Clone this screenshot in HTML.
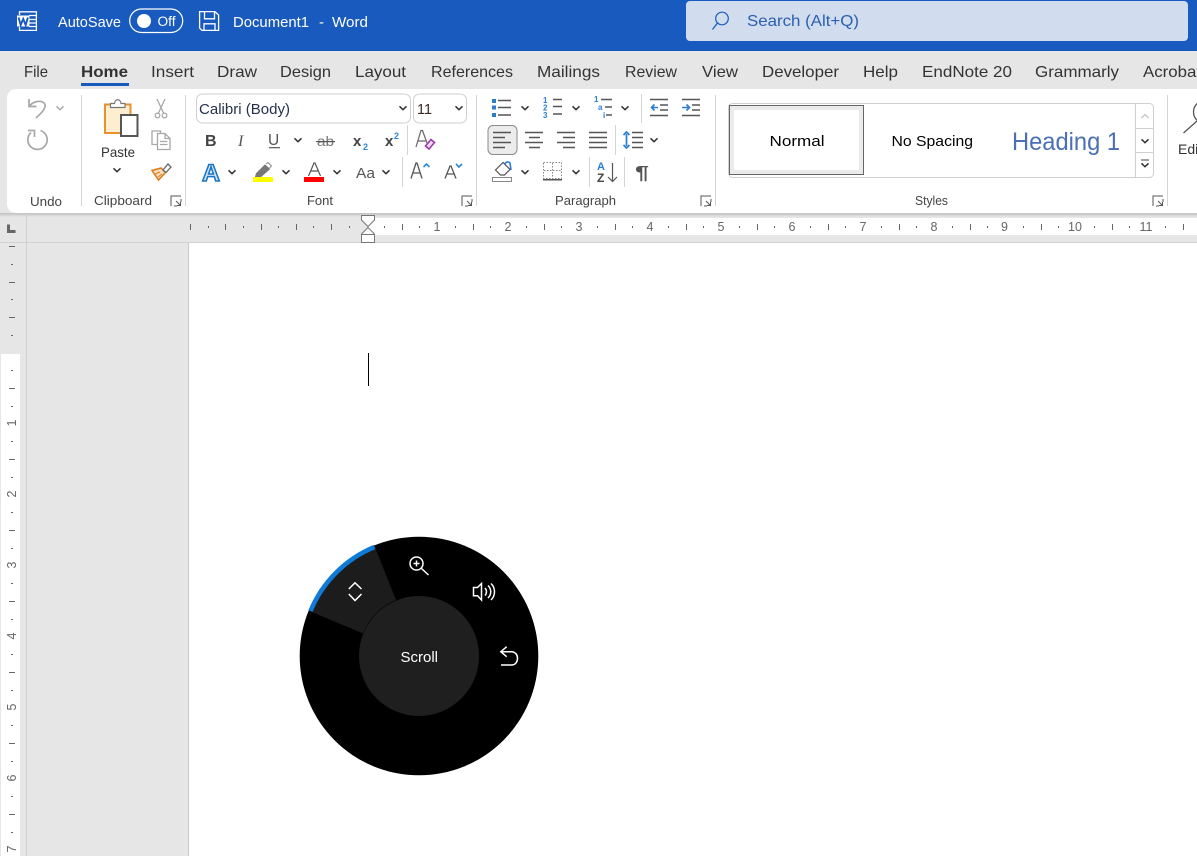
<!DOCTYPE html>
<html><head><meta charset="utf-8"><title>Document1 - Word</title>
<style>
html,body{margin:0;padding:0;width:1197px;height:856px;overflow:hidden;background:#e6e6e6}
svg{display:block;position:absolute;left:0;top:0}
text{font-family:"Liberation Sans",sans-serif;fill:#333}
.t{font-size:16px;fill:#333}
.g{font-size:13px;fill:#444}
.n{font-size:12.5px;fill:#666}
</style></head><body>
<svg width="1197" height="856" viewBox="0 0 1197 856" xmlns="http://www.w3.org/2000/svg">
<defs>
<path id="c" d="M-3.5-1.7 0 1.700 3.500-1.700" fill="none" stroke="#333" stroke-width="1.500"/>
<g id="dl" fill="none" stroke="#555" stroke-width="1"><path d="M-5 5V-5H5M0 0 4.500 4.500M4.500 1V4.500H1"/><path d="M-2 5H1M5-2V1"/></g>
<linearGradient id="sh" x1="0" y1="0" x2="0" y2="1"><stop offset="0" stop-color="#c0c0c0"/><stop offset="1" stop-color="#e6e6e6"/></linearGradient>
<pattern id="hr" patternUnits="userSpaceOnUse" x="366" y="215" width="71" height="28">
<rect x="18" y="11" width="1" height="2" fill="#666"/><rect x="36" y="9" width="1" height="6" fill="#666"/><rect x="53" y="11" width="1" height="2" fill="#666"/>
</pattern>
<pattern id="vr" patternUnits="userSpaceOnUse" x="0" y="352" width="24" height="71">
<rect x="11" y="18" width="2" height="1" fill="#666"/><rect x="9" y="36" width="6" height="1" fill="#666"/><rect x="11" y="54" width="2" height="1" fill="#666"/>
</pattern>
</defs>

<!-- Title bar -->
<rect width="1197" height="51" fill="#185abd"/>
<path d="M19.500 15V11.800H36.400V30.400H19.500V27" fill="none" stroke="#fff" stroke-width="1.300"/>
<path d="M29 15.500H36.400M29 19.500H36.400M29 23H36.400M29 26.500H36.400" fill="none" stroke="#fff" stroke-width="1.300"/>
<rect x="17" y="15.500" width="12.500" height="11" fill="#fff"/>
<path d="M18.600 17.500 20.700 25 23.200 19 25.700 25 27.900 17.500" fill="none" stroke="#185abd" stroke-width="1.900"/>
<text x="58" y="27" style="fill:#fff;font-size:15px" textLength="63" lengthAdjust="spacingAndGlyphs">AutoSave</text>
<rect x="129.700" y="9" width="53" height="23.500" rx="11.750" fill="none" stroke="#fff" stroke-width="1.200"/>
<circle cx="144" cy="21" r="7" fill="#fff"/>
<text x="157.500" y="26" style="fill:#fff;font-size:13.500px" textLength="18" lengthAdjust="spacingAndGlyphs">Off</text>
<path d="M199.600 11.600H215L218.600 15V30.400H202L199.600 28Z" fill="none" stroke="#fff" stroke-width="1.300"/>
<path d="M204.500 11.800V18.800H214.500V11.800M204 30V23.800H215V30" fill="none" stroke="#fff" stroke-width="1.300"/>
<text x="233" y="27" style="fill:#fff;font-size:15px" textLength="76" lengthAdjust="spacingAndGlyphs">Document1</text>
<text x="319" y="27" style="fill:#fff;font-size:15px">-</text>
<text x="332" y="27" style="fill:#fff;font-size:15px" textLength="36" lengthAdjust="spacingAndGlyphs">Word</text>
<rect x="686" y="1" width="502" height="40" rx="4" fill="#d1dcee"/>
<circle cx="722" cy="18.500" r="6.300" fill="none" stroke="#185abd" stroke-width="1.200"/>
<path d="M717.500 23 712.500 29.500" stroke="#185abd" stroke-width="1.300"/>
<text x="747" y="26" style="fill:#2a5fae;font-size:16px" textLength="112" lengthAdjust="spacingAndGlyphs">Search (Alt+Q)</text>

<!-- Tabs -->
<text class="t" x="24" y="77" textLength="24" lengthAdjust="spacingAndGlyphs">File</text>
<text class="t" x="81" y="77" textLength="47" lengthAdjust="spacingAndGlyphs" style="font-weight:bold;fill:#333">Home</text>
<rect x="81" y="83" width="48" height="3" fill="#185abd"/>
<text class="t" x="151" y="77" textLength="43" lengthAdjust="spacingAndGlyphs">Insert</text>
<text class="t" x="217" y="77" textLength="40" lengthAdjust="spacingAndGlyphs">Draw</text>
<text class="t" x="280" y="77" textLength="51" lengthAdjust="spacingAndGlyphs">Design</text>
<text class="t" x="355" y="77" textLength="51" lengthAdjust="spacingAndGlyphs">Layout</text>
<text class="t" x="431" y="77" textLength="82" lengthAdjust="spacingAndGlyphs">References</text>
<text class="t" x="537" y="77" textLength="63" lengthAdjust="spacingAndGlyphs">Mailings</text>
<text class="t" x="625" y="77" textLength="52" lengthAdjust="spacingAndGlyphs">Review</text>
<text class="t" x="702" y="77" textLength="36" lengthAdjust="spacingAndGlyphs">View</text>
<text class="t" x="762" y="77" textLength="77" lengthAdjust="spacingAndGlyphs">Developer</text>
<text class="t" x="863" y="77" textLength="35" lengthAdjust="spacingAndGlyphs">Help</text>
<text class="t" x="922" y="77" textLength="90" lengthAdjust="spacingAndGlyphs">EndNote 20</text>
<text class="t" x="1035" y="77" textLength="84" lengthAdjust="spacingAndGlyphs">Grammarly</text>
<text class="t" x="1143" y="77" textLength="58" lengthAdjust="spacingAndGlyphs">Acrobat</text>

<!-- Ruler -->
<rect x="0" y="213" width="1197" height="4" fill="url(#sh)"/>
<rect x="368" y="218" width="829" height="17" fill="#fff"/>
<rect x="0" y="242" width="189" height="1" fill="#d2d2d2"/>
<rect x="189" y="242" width="1008" height="1" fill="#d2d2d2"/>
<rect x="189" y="243" width="1008" height="613" fill="#fff"/>
<rect x="188" y="243" width="1" height="613" fill="#c8c8c8"/>
<rect x="26" y="215" width="1" height="641" fill="#d0d0d0"/>
<rect x="370" y="215" width="827" height="28" fill="url(#hr)"/>
<path d="M190.500 224v6M225.500 224v6M261.500 224v6M296.500 224v6M331.500 224v6" stroke="#666" stroke-width="1"/>
<path d="M208.500 226v2M243.500 226v2M278.500 226v2M313.500 226v2M349.500 226v2" stroke="#666" stroke-width="1"/>
<text class="n" x="437" y="231" text-anchor="middle">1</text>
<text class="n" x="508" y="231" text-anchor="middle">2</text>
<text class="n" x="579" y="231" text-anchor="middle">3</text>
<text class="n" x="650" y="231" text-anchor="middle">4</text>
<text class="n" x="721" y="231" text-anchor="middle">5</text>
<text class="n" x="792" y="231" text-anchor="middle">6</text>
<text class="n" x="863" y="231" text-anchor="middle">7</text>
<text class="n" x="934" y="231" text-anchor="middle">8</text>
<text class="n" x="1004.500" y="231" text-anchor="middle">9</text>
<text class="n" x="1075" y="231" text-anchor="middle">10</text>
<text class="n" x="1146" y="231" text-anchor="middle">11</text>
<path d="M361.500 215.500H374.500V220L368 226.500 361.500 220Z" fill="#fff" stroke="#777"/>
<path d="M368 227.500 374.500 234V242.500H361.500V234Z" fill="#fff" stroke="#777"/>
<path d="M361.500 234.500H374.500" stroke="#777"/>
<!-- Vertical ruler -->
<rect x="1" y="354" width="19" height="502" fill="#fff"/>
<path d="M7 224.500H10V230H15.500V233H7Z" fill="#666"/>
<rect x="0" y="354" width="24" height="502" fill="url(#vr)"/>
<path d="M9 246.500h6M9 282.500h6M9 317.500h6" stroke="#666"/>
<path d="M11 264.500h2M11 299.500h2M11 335.500h2" stroke="#666"/>
<text class="n" transform="translate(16,423) rotate(-90)" text-anchor="middle">1</text>
<text class="n" transform="translate(16,494) rotate(-90)" text-anchor="middle">2</text>
<text class="n" transform="translate(16,565) rotate(-90)" text-anchor="middle">3</text>
<text class="n" transform="translate(16,636) rotate(-90)" text-anchor="middle">4</text>
<text class="n" transform="translate(16,707) rotate(-90)" text-anchor="middle">5</text>
<text class="n" transform="translate(16,778) rotate(-90)" text-anchor="middle">6</text>
<text class="n" transform="translate(16,849) rotate(-90)" text-anchor="middle">7</text>

<!-- Ribbon -->
<rect x="7" y="89" width="1210" height="124" rx="9" fill="#fff"/>
<path d="M81.500 95V206M185.500 95V206M476.500 95V206M715.500 95V206M1167.500 95V206" stroke="#d4d4d4"/>

<!-- Undo -->
<path d="M29 99V106.500H36.500M29.500 106C33 101.500 41 99.500 44.500 103.500C47 107.500 42 112.500 36 118" fill="none" stroke="#a8a8a8" stroke-width="1.700"/>
<use href="#c" x="60" y="108" style="opacity:.4"/>
<path d="M40.500 130.500A9.700 9.700 0 1 1 31 132.500M28 130.500H34.500V137" fill="none" stroke="#a8a8a8" stroke-width="1.700"/>
<text class="g" x="30" y="206" textLength="32" lengthAdjust="spacingAndGlyphs">Undo</text>

<!-- Clipboard -->
<rect x="105" y="104.500" width="25.500" height="28.500" fill="#fdeecf" stroke="#e8912d" stroke-width="2"/>
<path d="M110.500 107.500V103.500H114.500C115 98.500 120.500 98.500 121 103.500H125V107.500Z" fill="#fff" stroke="#777" stroke-width="1.200"/>
<rect x="121" y="115" width="16.500" height="21" fill="#fff" stroke="#555" stroke-width="2"/>
<text x="101" y="157" style="font-size:14px;fill:#333" textLength="34" lengthAdjust="spacingAndGlyphs">Paste</text>
<use href="#c" x="117" y="170"/>
<g fill="none" stroke="#a8a8a8" stroke-width="1.300">
<path d="M157 99 163.500 113M165 99 158.500 113"/>
<circle cx="157.500" cy="115.500" r="2.300"/><circle cx="164.500" cy="115.500" r="2.300"/>
<path d="M157 144.500H152V131H160.500V133.500"/>
<path d="M157.500 133.500H165L170 138.500V149.500H157.500ZM165 133.500V138.500H170M160 141.500H167.500M160 144.500H167.500" />
</g>
<path d="M161 168 152 170.500 158.500 180 165.500 172.500Z" fill="#f6dcb8" stroke="#dd7a17" stroke-width="1.500"/>
<path d="M155 174 160 172M158 177 162 174" stroke="#dd7a17"/>
<path d="M163 170 168 164 171 167 166 172.500Z" fill="#fff" stroke="#666" stroke-width="1.300"/>
<text class="g" x="94" y="205" textLength="58" lengthAdjust="spacingAndGlyphs">Clipboard</text>
<use href="#dl" x="176" y="201"/>

<!-- Font -->
<rect x="196.500" y="94" width="214" height="29" rx="6" fill="#fff" stroke="#cfcfcf"/>
<rect x="413.500" y="94" width="53" height="29" rx="6" fill="#fff" stroke="#cfcfcf"/>
<text x="199" y="114" style="font-size:14.500px;fill:#26324d" textLength="91" lengthAdjust="spacingAndGlyphs">Calibri (Body)</text>
<text x="417" y="114" style="font-size:14.500px;fill:#3d2a26" textLength="15" lengthAdjust="spacingAndGlyphs">11</text>
<use href="#c" x="403" y="108"/><use href="#c" x="459" y="108"/>

<text x="205" y="146" style="font-size:16px;font-weight:bold;fill:#444">B</text>
<text x="238" y="146" style="font-size:16px;font-style:italic;font-family:'Liberation Serif',serif;fill:#555">I</text>
<text x="268" y="145" style="font-size:15.500px;fill:#555">U</text>
<rect x="269" y="147" width="11" height="1.300" fill="#666"/>
<use href="#c" x="298" y="140"/>
<text x="317" y="146" style="font-size:14px;fill:#777" textLength="17" lengthAdjust="spacingAndGlyphs">ab</text>
<rect x="316" y="141" width="19" height="1.200" fill="#555"/>
<text x="353" y="146" style="font-size:15px;font-weight:bold;fill:#444">x</text>
<text x="363" y="150" style="font-size:9px;font-weight:bold;fill:#2b88d8">2</text>
<text x="385" y="146" style="font-size:15px;font-weight:bold;fill:#444">x</text>
<text x="394" y="139" style="font-size:9px;font-weight:bold;fill:#2b88d8">2</text>
<path d="M407.500 125V155M402.500 157V187" stroke="#d4d4d4"/>
<path d="M416 147 421 130.500H422.500L427 143M418 141H425.500" fill="none" stroke="#666" stroke-width="1.200"/>
<path d="M425.500 146 431 139.500 434.500 142.500 429 149Z" fill="#f3d9f0" stroke="#9a3bab" stroke-width="1.600"/>

<!-- Text effects -->
<text x="202" y="181" style="font-size:24px;font-weight:bold;fill:#cfe6f8;stroke:#1b74c4;stroke-width:1.500px" textLength="18" lengthAdjust="spacingAndGlyphs">A</text>
<use href="#c" x="232" y="172"/>
<path d="M256.500 173.500 265 165 269.500 169 261 176.500H255.500Z" fill="#777" stroke="#777"/>
<path d="M266 164 268 162.500 271.500 166 269.500 168" fill="none" stroke="#888"/>
<rect x="253" y="177" width="20" height="5" fill="#ff0"/>
<use href="#c" x="286" y="172"/>
<path d="M308.500 176 314 163H315L320.500 176M310.500 171H318.500" fill="none" stroke="#555" stroke-width="1.200"/>
<rect x="304" y="177" width="20" height="5" fill="#f00"/>
<use href="#c" x="337" y="172"/>
<text x="356" y="178" style="font-size:15px;fill:#555" textLength="19" lengthAdjust="spacingAndGlyphs">Aa</text>
<use href="#c" x="386" y="172"/>
<path d="M411 178.500 416 163H417L422 178.500M413 173H420" fill="none" stroke="#555" stroke-width="1.300"/>
<path d="M423.500 167 426.500 164 429.500 167" fill="none" stroke="#2b88d8" stroke-width="1.600"/>
<path d="M445 178.500 450 166H451L456 178.500M447 174H454" fill="none" stroke="#555" stroke-width="1.300"/>
<path d="M456 164 459 167 462 164" fill="none" stroke="#2b88d8" stroke-width="1.600"/>
<text class="g" x="307" y="205" textLength="26" lengthAdjust="spacingAndGlyphs">Font</text>
<use href="#dl" x="467" y="201"/>

<!-- Paragraph row 1 -->
<g fill="#2b7cd3">
<rect x="492" y="99" width="4" height="4"/><rect x="492" y="105.500" width="4" height="4"/><rect x="492" y="113" width="4" height="4"/>
</g>
<path d="M498 100.500H511M498 107.500H511M498 115H511M553 99.500H562M553 106.500H562M553 114H562M601 99.500H612M605 107H612M606 115H612M650 99.500H668M650 115.500H668M660 105H668M660 110H668M682 99.500H700M682 115.500H700M692 105H700M692 110H700" stroke="#555" stroke-width="1.500" fill="none"/>
<text x="543" y="103" style="font-size:8px;font-weight:bold;fill:#2b7cd3">1</text>
<text x="543" y="110.500" style="font-size:8px;font-weight:bold;fill:#2b7cd3">2</text>
<text x="543" y="118" style="font-size:8px;font-weight:bold;fill:#2b7cd3">3</text>
<text x="594" y="102" style="font-size:8px;font-weight:bold;fill:#2b7cd3">1</text>
<text x="598" y="110" style="font-size:8px;font-weight:bold;fill:#2b7cd3">a</text>
<text x="603" y="118" style="font-size:8px;font-weight:bold;fill:#2b7cd3">i</text>
<use href="#c" x="525" y="108"/><use href="#c" x="576" y="108"/><use href="#c" x="625" y="108"/>
<path d="M641.500 94V123M615.500 125V155M589.500 157V187M624.500 157V187" stroke="#d4d4d4"/>
<path d="M654.500 104.500 651.500 107.500 654.500 110.500M652 107.500H658" fill="none" stroke="#2b7cd3" stroke-width="1.600"/>
<path d="M682 107.500H689M686.500 104.500 689.500 107.500 686.500 110.500" fill="none" stroke="#2b7cd3" stroke-width="1.600"/>

<!-- Paragraph row 2 -->
<rect x="488" y="125.500" width="29" height="29" rx="5" fill="#ececec" stroke="#8a8a8a"/>
<path d="M493 132.500H511M493 137.500H505M493 142.500H511M493 147.500H505M525 132.500H543M529 137.500H540M525 142.500H543M529 147.500H540M557 132.500H575M563 137.500H575M557 142.500H575M563 147.500H575M589 132.500H607M589 137.500H607M589 142.500H607M589 147.500H607M632 132.500H643M632 137.500H643M632 142.500H643M632 147.500H643" stroke="#555" stroke-width="1.500" fill="none"/>
<path d="M626.500 134V146M623.500 135 626.500 132 629.500 135M623.500 145 626.500 148 629.500 145" fill="none" stroke="#2b7cd3" stroke-width="1.700"/>
<use href="#c" x="654" y="140"/>

<!-- Paragraph row 3 -->
<path d="M495.500 170 503 162.500 510 169.500 504.500 175 500.500 175Z" fill="#fff" stroke="#555" stroke-width="1.200"/>
<path d="M505 165C505 162 508 161 510 163L511 170" fill="none" stroke="#2b7cd3" stroke-width="1.600"/>
<rect x="492.500" y="177.500" width="19" height="4" fill="#fff" stroke="#888"/>
<use href="#c" x="525" y="172"/>
<rect x="543.500" y="162.500" width="18" height="16" fill="none" stroke="#888" stroke-dasharray="1.500 1.500"/>
<path d="M552.500 163V179M544 170.500H561" stroke="#888" stroke-dasharray="1.500 1.500" fill="none"/>
<rect x="543" y="179" width="19" height="1.500" fill="#555"/>
<use href="#c" x="576" y="172"/>
<text x="597" y="170" style="font-size:11px;font-weight:bold;fill:#2b7cd3">A</text>
<text x="597" y="182" style="font-size:12px;font-weight:bold;fill:#444">Z</text>
<path d="M612.500 163V181.500M608 177 612.500 181.500 617 177" fill="none" stroke="#555" stroke-width="1.200"/>
<text x="635" y="179" style="font-size:18px;font-weight:bold;fill:#555" textLength="14" lengthAdjust="spacingAndGlyphs">¶</text>
<text class="g" x="555" y="205" textLength="61" lengthAdjust="spacingAndGlyphs">Paragraph</text>
<use href="#dl" x="706" y="201"/>

<!-- Styles -->
<rect x="728.500" y="103.500" width="425" height="74" rx="4" fill="#fff" stroke="#cfcfcf"/>
<rect x="729.500" y="105.500" width="134" height="69" fill="#ebebeb" stroke="#666"/>
<rect x="734" y="110" width="125" height="60" fill="#fff"/>
<text x="769.500" y="146" style="font-size:15px;fill:#000" textLength="55" lengthAdjust="spacingAndGlyphs">Normal</text>
<text x="891.500" y="146" style="font-size:15px;fill:#000" textLength="81.500" lengthAdjust="spacingAndGlyphs">No Spacing</text>
<text x="1012" y="150" style="font-size:25px;fill:#4a6fb5" textLength="108" lengthAdjust="spacingAndGlyphs">Heading 1</text>
<path d="M1135.500 104V177M1135 128.500H1154M1135 152.500H1154" stroke="#cfcfcf" fill="none"/>
<path d="M1141.500 118 1145 114.500 1148.500 118" fill="none" stroke="#c4c4c4" stroke-width="1.300"/>
<use href="#c" x="1145" y="141"/>
<path d="M1141 160H1149" stroke="#444"/>
<use href="#c" x="1145" y="165"/>
<text class="g" x="915" y="205" textLength="33" lengthAdjust="spacingAndGlyphs">Styles</text>
<use href="#dl" x="1158" y="201"/>

<!-- Editing -->
<circle cx="1205" cy="112" r="11.500" fill="none" stroke="#555" stroke-width="1.300"/>
<path d="M1197 121 1183.500 133" stroke="#555" stroke-width="1.300"/>
<text x="1178" y="154" style="font-size:14px;fill:#333">Editing</text>

<!-- Cursor -->
<rect x="368" y="353" width="1" height="33" fill="#000"/>

<!-- Wheel -->
<circle cx="419" cy="656" r="119.300" fill="#000"/>
<path d="M374.500 546 396 600A60 60 0 0 0 363 633.500L309.500 611A119 119 0 0 1 374.500 546Z" fill="#1c1c1c"/>
<path d="M310.500 611A118 118 0 0 1 374.500 547" fill="none" stroke="#0f7bd8" stroke-width="4.500"/>
<circle cx="419" cy="656" r="60" fill="#1f1f1f"/>
<text x="400.500" y="662" style="font-size:14.500px;fill:#fff" textLength="37.500" lengthAdjust="spacingAndGlyphs">Scroll</text>
<g fill="none" stroke="#fff" stroke-width="1.500">
<circle cx="416.500" cy="563.500" r="6.500"/>
<path d="M421.500 568.500 428.500 575M413.500 563.500H419.500M416.500 560.500V566.500"/>
<path d="M348.800 589 355 582.800 361.500 589M348.800 594 355 600.500 361.500 594"/>
<path d="M473.500 587.500H477.500L481.500 583.500V600L477.500 595.700H473.500Z"/>
<path d="M485 588A5.500 5.500 0 0 1 485 595.500M488 585.500A8.500 8.500 0 0 1 488 598M491 583.500A11.500 11.500 0 0 1 491 600"/>
<path d="M506.700 646.700 500.800 651.700 506.700 656.700M501 651.700H511.500C519.500 651.700 519.500 665 511.500 665H501"/>
</g>
</svg>
</body></html>
